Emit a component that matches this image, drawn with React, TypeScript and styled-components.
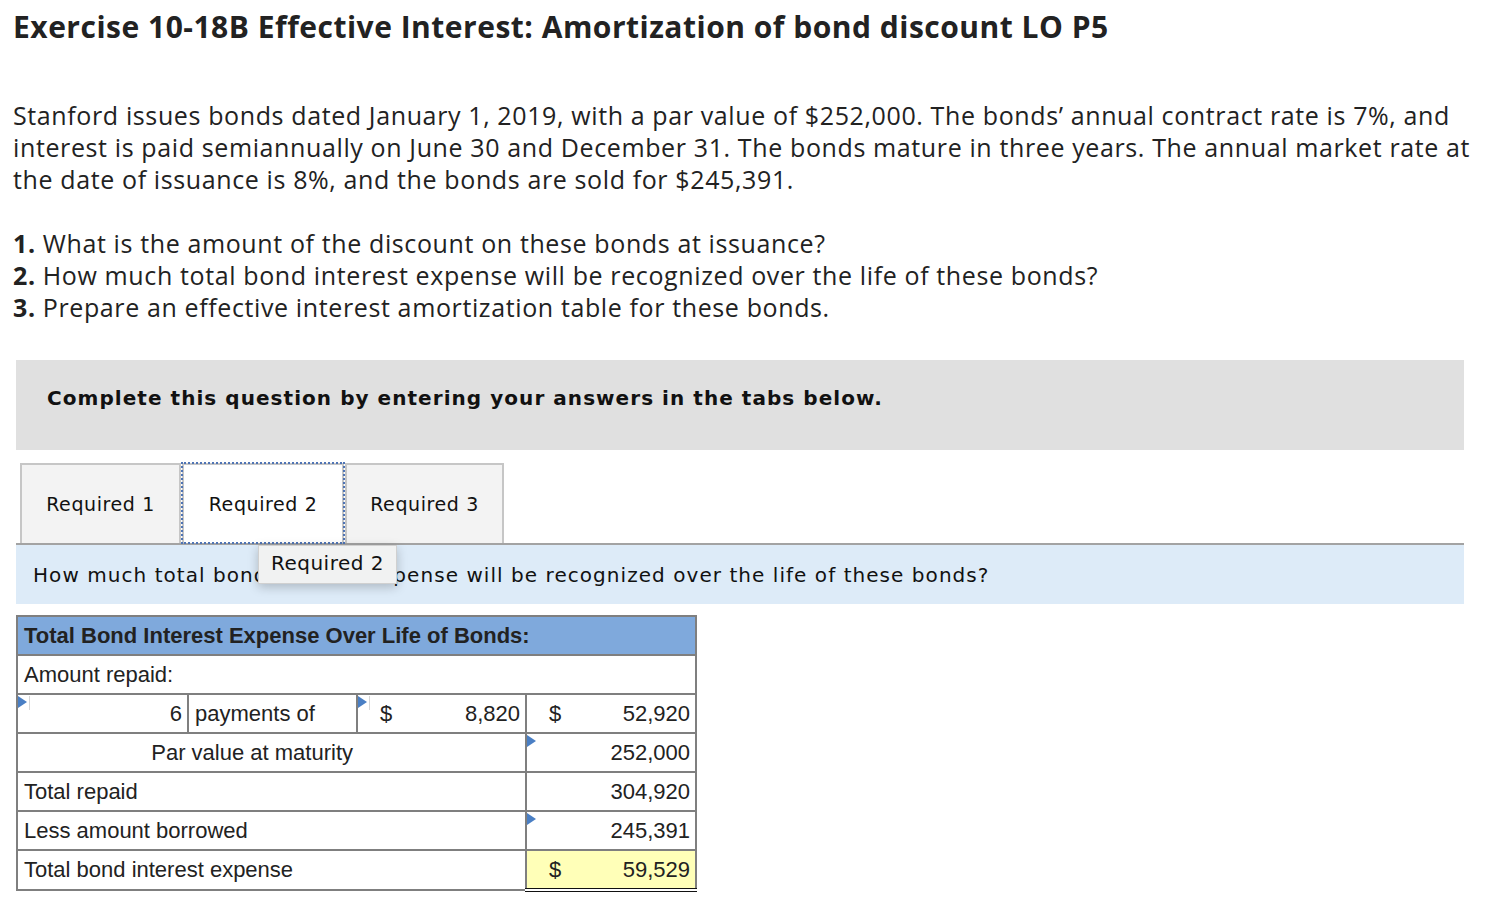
import React from "react";
import styled, { createGlobalStyle } from "styled-components";

const GlobalStyle = createGlobalStyle`
  body {
    margin: 0;
    background: #fff;
    color: #222;
  }
`;

const Page = styled.div`
  padding: 9px 30px 0 13px;
  width: 1494px;
  box-sizing: border-box;
`;

const Title = styled.h1`
  margin: 0;
  font-family: "Open Sans", Lato, sans-serif;
  font-weight: 700;
  font-size: 30px;
  line-height: 36px;
  letter-spacing: 0.5px;
  white-space: nowrap;
  color: #222;
`;

const Prose = styled.p<{ $top: number }>`
  margin: ${(p) => p.$top}px 0 0;
  font-family: "Open Sans", Lato, sans-serif;
  font-size: 25px;
  line-height: 32px;
  letter-spacing: 0.62px;
  white-space: nowrap;
  color: #222;
`;

const Num = styled.b`
  font-weight: 700;
`;

const Instructions = styled.div`
  margin: 37px 0 0 3px;
  width: 1448px;
  height: 90px;
  box-sizing: border-box;
  padding: 26px 0 0 31px;
  background: #e0e0e0;
  font-family: Verdana, "DejaVu Sans", sans-serif;
  font-weight: 700;
  font-size: 20px;
  line-height: 24px;
  letter-spacing: 1.05px;
  color: #111;
`;

const TabArea = styled.div`
  position: relative;
  margin: 13px 0 0 3px;
  width: 1448px;
`;

const TabStrip = styled.div`
  display: flex;
  align-items: flex-end;
  gap: 1px;
  padding-left: 4px;
  border-bottom: 2px solid #a3a3a3;
`;

const Tab = styled.div<{ $active?: boolean; $w: number }>`
  width: ${(p) => p.$w}px;
  height: 80px;
  box-sizing: border-box;
  display: flex;
  align-items: center;
  justify-content: center;
  font-family: Verdana, "DejaVu Sans", sans-serif;
  font-size: 19px;
  letter-spacing: 0.6px;
  color: #111;
  background: ${(p) => (p.$active ? "#fff" : "#f3f3f3")};
  border: 2px solid #c6c6c6;
  border-bottom: none;
  outline: ${(p) => (p.$active ? "2px dotted #4f74b4" : "none")};
  outline-offset: -1px;
`;

const Prompt = styled.div`
  height: 59px;
  display: flex;
  align-items: center;
  padding-left: 17px;
  background: #ddebf8;
  font-family: Verdana, "DejaVu Sans", sans-serif;
  font-size: 20px;
  letter-spacing: 1.05px;
  color: #111;
`;

const Tooltip = styled.div`
  position: absolute;
  left: 242px;
  top: 82px;
  width: 139px;
  height: 39px;
  box-sizing: border-box;
  display: flex;
  align-items: center;
  justify-content: center;
  padding-bottom: 4px;
  background: #f1f2f2;
  border: 1px solid #d0d0d0;
  box-shadow: 0 3px 10px rgba(0, 0, 0, 0.22);
  font-family: Verdana, "DejaVu Sans", sans-serif;
  font-size: 20px;
  letter-spacing: 0.5px;
  color: #111;
`;

const Sheet = styled.table`
  margin: 11px 0 0 3px;
  width: 679px;
  border-collapse: collapse;
  border: 2px solid #7f7f7f;
  font-family: Arial, "Liberation Sans", sans-serif;
  font-size: 22px;
  color: #222;
  table-layout: fixed;
`;

const HeadCell = styled.th`
  height: 37px;
  padding: 0 6px;
  text-align: left;
  font-weight: 700;
  background: #7fa9dc;
  border-bottom: 2px solid #7f7f7f;
`;

const Cell = styled.td<{
  $align?: "left" | "right";
  $pr?: number;
  $topDark?: boolean;
  $double?: boolean;
  $hl?: boolean;
}>`
  position: relative;
  height: 37px;
  padding: 0 ${(p) => p.$pr ?? 5}px 0 6px;
  text-align: ${(p) => p.$align ?? "left"};
  border: 2px solid #7f7f7f;
  ${(p) => (p.$topDark ? "border-top: 2px solid #111;" : "")}
  ${(p) => (p.$double ? "border-bottom: 4px double #111;" : "")}
  background: ${(p) => (p.$hl ? "#ffffb8" : "transparent")};
  white-space: nowrap;
`;

const Money = styled.div`
  display: flex;
  justify-content: space-between;
  padding-left: 16px;
`;

const Marker = styled.span`
  position: absolute;
  left: 0;
  top: 1px;
  width: 0;
  height: 0;
  border-top: 6px solid transparent;
  border-bottom: 6px solid transparent;
  border-left: 9px solid #4a7fc4;
`;

const InputEdge = styled.span`
  position: absolute;
  left: 11px;
  top: 1px;
  width: 1px;
  height: 14px;
  background: #d6d6d6;
`;

export default function App() {
  return (
    <>
      <GlobalStyle />
      <Page>
        <Title>
          Exercise 10-18B Effective Interest: Amortization of bond discount LO P5
        </Title>
        <Prose $top={54}>
          Stanford issues bonds dated January 1, 2019, with a par value of
          $252,000. The bonds’ annual contract rate is 7%, and
          <br />
          interest is paid semiannually on June 30 and December 31. The bonds
          mature in three years. The annual market rate at
          <br />
          the date of issuance is 8%, and the bonds are sold for $245,391.
        </Prose>
        <Prose $top={32}>
          <Num>1.</Num> What is the amount of the discount on these bonds at
          issuance?
          <br />
          <Num>2.</Num> How much total bond interest expense will be recognized
          over the life of these bonds?
          <br />
          <Num>3.</Num> Prepare an effective interest amortization table for
          these bonds.
        </Prose>

        <Instructions>
          Complete this question by entering your answers in the tabs below.
        </Instructions>

        <TabArea>
          <TabStrip>
            <Tab $w={161}>Required 1</Tab>
            <Tab $w={162} $active>
              Required 2
            </Tab>
            <Tab $w={159}>Required 3</Tab>
          </TabStrip>
          <Prompt>
            How much total bond interest expense will be recognized over the
            life of these bonds?
          </Prompt>
          <Tooltip>Required 2</Tooltip>
        </TabArea>

        <Sheet>
          <colgroup>
            <col style={{ width: 171 }} />
            <col style={{ width: 169 }} />
            <col style={{ width: 169 }} />
            <col style={{ width: 170 }} />
          </colgroup>
          <tbody>
            <tr>
              <HeadCell colSpan={4}>
                Total Bond Interest Expense Over Life of Bonds:
              </HeadCell>
            </tr>
            <tr>
              <Cell colSpan={4}>Amount repaid:</Cell>
            </tr>
            <tr>
              <Cell $align="right">
                <Marker />
                <InputEdge />6
              </Cell>
              <Cell>payments of</Cell>
              <Cell>
                <Marker />
                <InputEdge />
                <Money>
                  <span>$</span>
                  <span>8,820</span>
                </Money>
              </Cell>
              <Cell>
                <Money>
                  <span>$</span>
                  <span>52,920</span>
                </Money>
              </Cell>
            </tr>
            <tr>
              <Cell colSpan={3} $align="right" $pr={172}>
                Par value at maturity
              </Cell>
              <Cell $align="right">
                <Marker />
                252,000
              </Cell>
            </tr>
            <tr>
              <Cell colSpan={3}>Total repaid</Cell>
              <Cell $align="right" $topDark>
                304,920
              </Cell>
            </tr>
            <tr>
              <Cell colSpan={3}>Less amount borrowed</Cell>
              <Cell $align="right">
                <Marker />
                245,391
              </Cell>
            </tr>
            <tr>
              <Cell colSpan={3}>Total bond interest expense</Cell>
              <Cell $topDark $double $hl>
                <Money>
                  <span>$</span>
                  <span>59,529</span>
                </Money>
              </Cell>
            </tr>
          </tbody>
        </Sheet>
      </Page>
    </>
  );
}
